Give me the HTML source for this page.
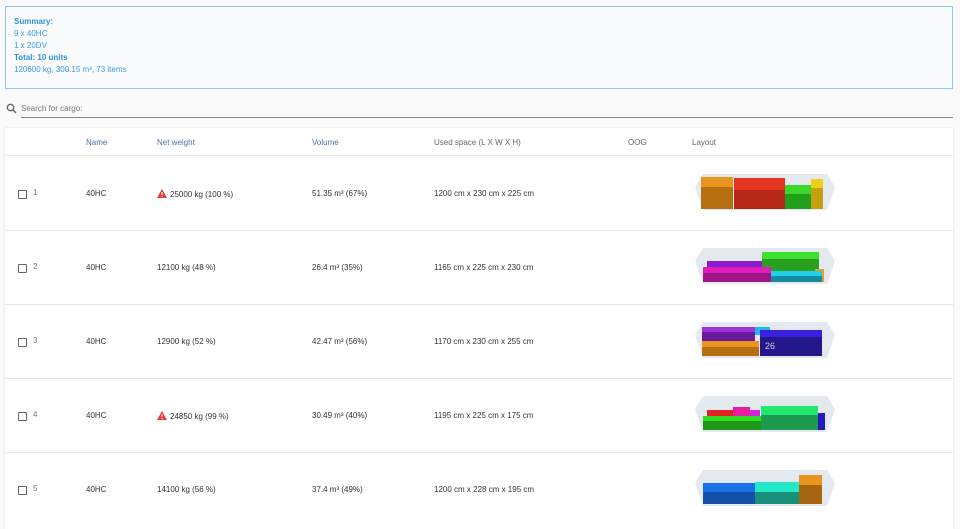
<!DOCTYPE html>
<html><head><meta charset="utf-8"><style>
*{margin:0;padding:0;box-sizing:border-box}
body{width:960px;height:529px;background:#fafafa;font-family:"Liberation Sans",Arial,sans-serif;font-size:8px;color:#333;position:relative;overflow:hidden}
.sum{position:absolute;left:5px;top:6px;width:948px;height:83px;border:1px solid #8fc3f2;background:#f9fbfd;padding:9px 0 0 8px;color:#3a9be8;line-height:12px;font-size:8px}
.sum b{font-weight:bold;color:#2f8fe0}
.srch{position:absolute;left:21px;top:100px;width:932px;height:18px;border-bottom:1px solid #888;color:#777;padding-top:4px;font-size:8px}
.card{position:absolute;left:5px;top:128px;width:948px;height:401px;background:#fff;box-shadow:0 0 2px rgba(0,0,0,.12)}
.hdr{position:absolute;left:0;top:0;width:948px;height:28px;border-bottom:1px solid #e6e6e6}
.hdr span{position:absolute;top:10px;color:#4a72a8;font-size:8px}
.hdr span.g{color:#666}
.row{position:absolute;left:0;width:948px;height:74px;border-bottom:1px solid #e6e6e6}
.row span{position:absolute;top:32px;font-size:8px;color:#333}
.cb{position:absolute;left:13px;top:33px;width:9px;height:9px;border:1.3px solid #666;border-radius:1px}
.row span.n{color:#777;top:31px}
.tri{display:inline-block;vertical-align:-1px;margin-right:3px}
svg.l{position:absolute;left:690px;top:16px}
</style></head><body>
<div class="sum"><b>Summary:</b><br>9 x 40HC<br>1 x 20DV<br><b>Total: 10 units</b><br>120600 kg, 300.15 m³, 73 items</div>
<svg style="position:absolute;left:6px;top:103px" width="11" height="11" viewBox="0 0 11 11"><circle cx="4.5" cy="4.5" r="3.2" fill="none" stroke="#666" stroke-width="1.3"/><line x1="7" y1="7" x2="10" y2="10" stroke="#666" stroke-width="1.5"/></svg>
<div class="srch">Search for cargo:</div>
<div class="card">
<div class="hdr"><span style="left:81px">Name</span><span style="left:152px">Net weight</span><span style="left:307px">Volume</span><span class="g" style="left:429px">Used space (L X W X H)</span><span class="g" style="left:623px">OOG</span><span class="g" style="left:687px">Layout</span></div>

<div class="row" style="top:29px"><div class="cb"></div><span class="n" style="left:28px">1</span><span style="left:81px">40HC</span><span style="left:152px"><svg class="tri" width="10" height="9"><path d="M5 0L10 9H0Z" fill="#e53935"/><rect x="4.5" y="3" width="1" height="3.2" fill="#fff"/><rect x="4.5" y="7" width="1" height="1" fill="#fff"/></svg>25000 kg (100 %)</span><span style="left:307px">51.35 m³ (67%)</span><span style="left:429px">1200 cm x 230 cm x 225 cm</span>
<svg class="l" width="140" height="40" viewBox="0 0 140 40"><path d="M8 1H132L140 14L132 37H8L0 14Z" fill="#e4e9ef"/>
<rect x="6" y="4" width="32" height="32" fill="#b5700f"/><rect x="6" y="4" width="32" height="10" fill="#ea9420"/>
<rect x="39" y="5" width="51" height="31" fill="#b8281a"/><rect x="39" y="5" width="51" height="12" fill="#e43522"/>
<rect x="90" y="12" width="30" height="24" fill="#23a01a"/><rect x="90" y="12" width="30" height="9" fill="#3ad82a"/>
<rect x="116" y="6" width="12" height="30" fill="#c4a00e"/><rect x="116" y="6" width="12" height="9" fill="#ecd018"/></svg></div>

<div class="row" style="top:103px"><div class="cb"></div><span class="n" style="left:28px">2</span><span style="left:81px">40HC</span><span style="left:152px">12100 kg (48 %)</span><span style="left:307px">26.4 m³ (35%)</span><span style="left:429px">1165 cm x 225 cm x 230 cm</span>
<svg class="l" width="140" height="40" viewBox="0 0 140 40"><path d="M8 1H132L140 14L132 37H8L0 14Z" fill="#e4e9ef"/>
<rect x="67" y="5" width="57" height="19" fill="#2aa020"/><rect x="67" y="5" width="57" height="7" fill="#3ee030"/>
<rect x="12" y="14" width="55" height="8" fill="#8a1cd0"/>
<rect x="120" y="22" width="9" height="13" fill="#e8a020"/>
<rect x="8" y="20" width="68" height="15" fill="#a01585"/><rect x="8" y="20" width="68" height="6" fill="#e21cb8"/>
<rect x="76" y="24" width="51" height="11" fill="#158aa0"/><rect x="76" y="24" width="51" height="5" fill="#22d0ea"/></svg></div>

<div class="row" style="top:177px"><div class="cb"></div><span class="n" style="left:28px">3</span><span style="left:81px">40HC</span><span style="left:152px">12900 kg (52 %)</span><span style="left:307px">42.47 m³ (56%)</span><span style="left:429px">1170 cm x 230 cm x 255 cm</span>
<svg class="l" width="140" height="40" viewBox="0 0 140 40"><path d="M8 1H132L140 14L132 37H8L0 14Z" fill="#e4e9ef"/>
<rect x="7" y="6" width="53" height="14" fill="#6a1a98"/><rect x="7" y="6" width="53" height="5" fill="#a030e0"/>
<rect x="60" y="6" width="15" height="8" fill="#20b8e0"/>
<rect x="65" y="9" width="62" height="26" fill="#24178c"/><rect x="65" y="9" width="62" height="7" fill="#3a20e0"/>
<rect x="7" y="20" width="57" height="15" fill="#b56e10"/><rect x="7" y="20" width="57" height="6" fill="#ec9420"/>
<text x="70" y="28" font-size="9" fill="#ccc" font-family="Liberation Sans">26</text></svg></div>

<div class="row" style="top:251px"><div class="cb"></div><span class="n" style="left:28px">4</span><span style="left:81px">40HC</span><span style="left:152px"><svg class="tri" width="10" height="9"><path d="M5 0L10 9H0Z" fill="#e53935"/><rect x="4.5" y="3" width="1" height="3.2" fill="#fff"/><rect x="4.5" y="7" width="1" height="1" fill="#fff"/></svg>24850 kg (99 %)</span><span style="left:307px">30.49 m³ (40%)</span><span style="left:429px">1195 cm x 225 cm x 175 cm</span>
<svg class="l" width="140" height="40" viewBox="0 0 140 40"><path d="M8 1H132L140 14L132 37H8L0 14Z" fill="#e4e9ef"/>
<rect x="12" y="15" width="28" height="7" fill="#e52020"/><rect x="38" y="12" width="17" height="10" fill="#e81c9c"/><rect x="55" y="15" width="10" height="7" fill="#d820e0"/>
<rect x="122" y="18" width="8" height="17" fill="#2418c0"/>
<rect x="8" y="21" width="58" height="14" fill="#1e9818"/><rect x="8" y="21" width="58" height="5" fill="#30e020"/>
<rect x="66" y="11" width="57" height="24" fill="#1e9a50"/><rect x="66" y="11" width="57" height="9" fill="#22e870"/></svg></div>

<div class="row" style="top:325px;border-bottom:none"><div class="cb"></div><span class="n" style="left:28px">5</span><span style="left:81px">40HC</span><span style="left:152px">14100 kg (56 %)</span><span style="left:307px">37.4 m³ (49%)</span><span style="left:429px">1200 cm x 228 cm x 195 cm</span>
<svg class="l" width="140" height="40" viewBox="0 0 140 40"><path d="M8 1H132L140 14L132 37H8L0 14Z" fill="#e4e9ef"/>
<rect x="8" y="14" width="52" height="21" fill="#1450a8"/><rect x="8" y="14" width="52" height="9" fill="#1a70e8"/>
<rect x="60" y="13" width="45" height="22" fill="#18907a"/><rect x="60" y="13" width="45" height="10" fill="#22e8c8"/>
<rect x="104" y="6" width="23" height="29" fill="#a86510"/><rect x="104" y="6" width="23" height="10" fill="#ec9420"/></svg></div>
</div>
</body></html>
